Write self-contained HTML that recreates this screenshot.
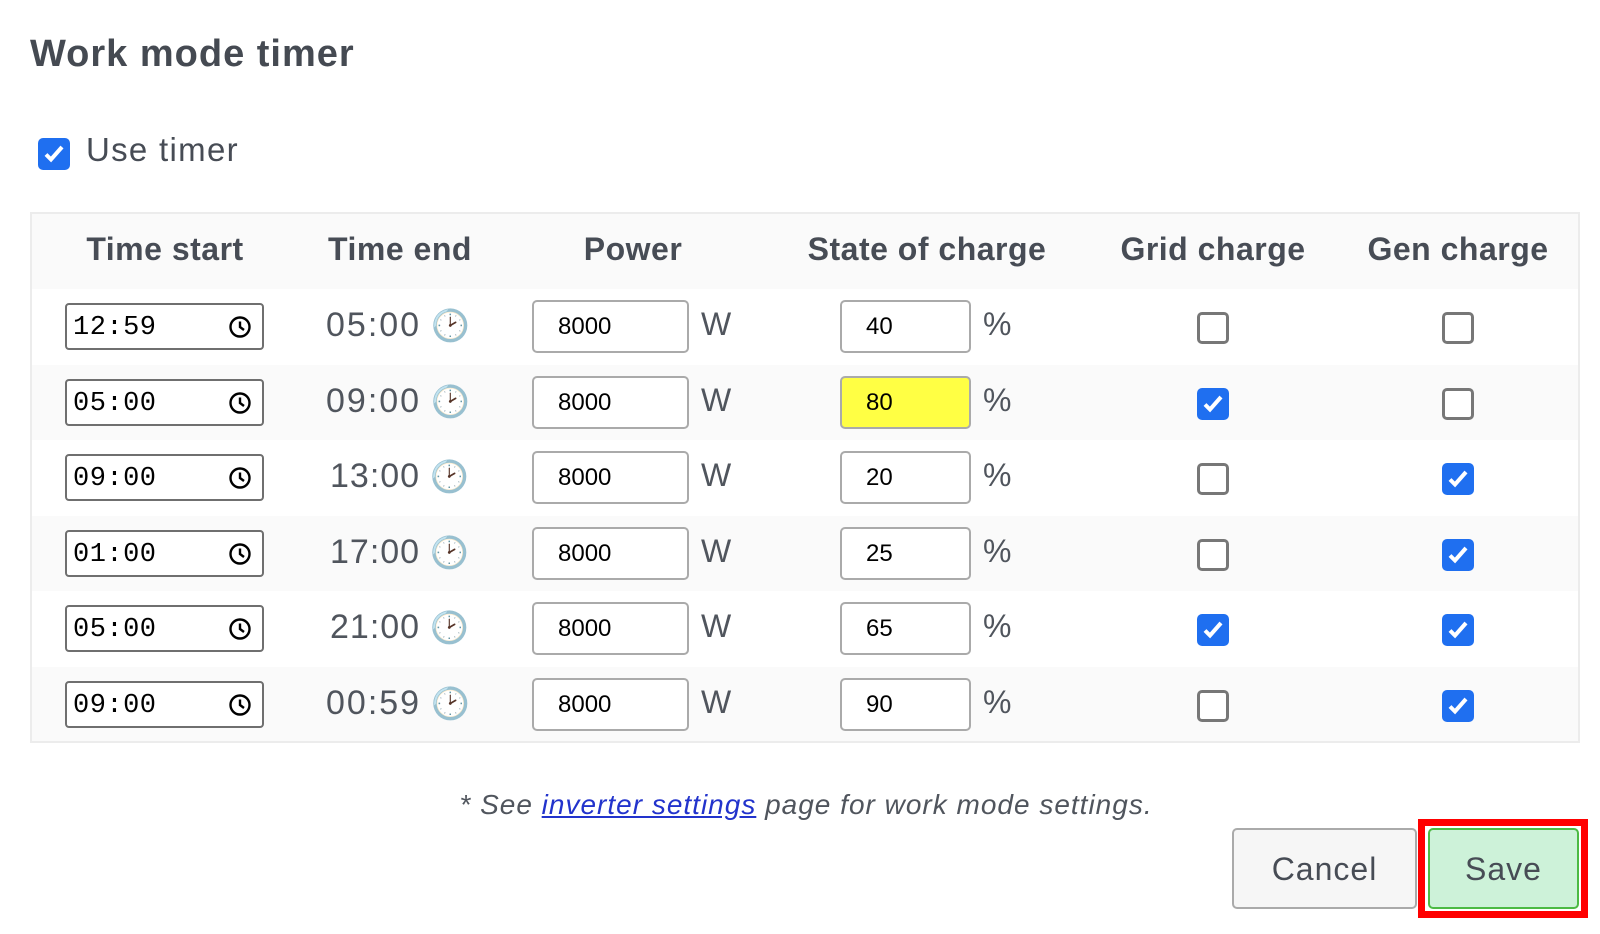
<!DOCTYPE html>
<html><head><meta charset="utf-8"><style>
*{box-sizing:border-box;margin:0;padding:0}
body{width:1600px;height:934px;background:#fff;position:relative;overflow:hidden;font-family:"Liberation Sans",sans-serif;color:#474c55}
.a{position:absolute}
h1{position:absolute;left:30px;top:33px;font-size:38px;font-weight:bold;color:#454a52;letter-spacing:1px}
.cb{position:absolute;width:32px;height:32px;border-radius:5px;border:3px solid #777;background:#fff}
.cb.on{background:#1f6ff0;border:none}
.cb.on svg{position:absolute;left:4px;top:4px}
.table{position:absolute;left:30px;top:212px;width:1550px;height:531px;border:2px solid #ececec;background:#fafafa}
.hd{position:absolute;top:0;height:77px;line-height:70px;font-size:32px;font-weight:bold;color:#474c55;text-align:center;transform:translateX(-50%);white-space:nowrap;letter-spacing:0.5px}
.row{position:absolute;left:0;width:1546px;height:75.5px}
.ti{position:absolute;left:33px;top:14px;width:199px;height:47px;border:2px solid #6f6f6f;border-radius:4px;background:#fff;font-family:"Liberation Mono",monospace;font-size:27px;line-height:47px;padding-left:6px;color:#000;letter-spacing:0.5px}
.ti svg{position:absolute;right:10px;top:10px}
.te{position:absolute;left:294px;top:0;line-height:72px;font-size:34px;color:#50555d;letter-spacing:2px}
.te span{font-size:31px;margin-left:10px}
.in{position:absolute;top:11px;height:53px;border:2px solid #aaa;border-radius:5px;background:#fff;font-size:24px;line-height:49px;padding-left:24px;color:#000}
.u{position:absolute;top:0;line-height:70px;font-size:32px;color:#50555d}
.btn{position:absolute;top:828px;height:81px;border-radius:5px;font-size:32px;text-align:center;line-height:78px;color:#474c55;letter-spacing:1px}
</style></head><body>
<h1>Work mode timer</h1>
<div class="cb on" style="left:38px;top:138px"><svg width="24" height="24" viewBox="0 0 24 24"><path d="M4 12.5l5 5L20 5" fill="none" stroke="#fff" stroke-width="4"/></svg></div>
<div class="a" style="left:86px;top:131px;font-size:33px;color:#474c55;letter-spacing:1.3px">Use timer</div>

<div class="table">
<div class="hd" style="left:133px">Time start</div>
<div class="hd" style="left:368px">Time end</div>
<div class="hd" style="left:601px">Power</div>
<div class="hd" style="left:895px">State of charge</div>
<div class="hd" style="left:1181px">Grid charge</div>
<div class="hd" style="left:1426px">Gen charge</div>
<div class="a" style="left:0;top:75px;width:1546px;height:2px;background:#ececec"></div>
</div>

<div class="row" style="left:32px;top:289px;background:#fff">
<div class="ti">12:59<svg width="24" height="24" viewBox="0 0 24 24"><circle cx="12" cy="12" r="9.5" fill="none" stroke="#000" stroke-width="2.4"/><path d="M12 6.5V12l4 3" fill="none" stroke="#000" stroke-width="2.4"/></svg></div>
<div class="te">05:00<span>🕑</span></div>
<div class="in" style="left:500px;width:157px">8000</div><div class="u" style="left:669px">W</div>
<div class="in" style="left:808px;width:131px">40</div><div class="u" style="left:951px">%</div>
<div class="cb" style="left:1165px;top:23px"></div><div class="cb" style="left:1410px;top:23px"></div>
</div>
<div class="row" style="left:32px;top:364.5px;background:#fafafa">
<div class="ti">05:00<svg width="24" height="24" viewBox="0 0 24 24"><circle cx="12" cy="12" r="9.5" fill="none" stroke="#000" stroke-width="2.4"/><path d="M12 6.5V12l4 3" fill="none" stroke="#000" stroke-width="2.4"/></svg></div>
<div class="te">09:00<span>🕑</span></div>
<div class="in" style="left:500px;width:157px">8000</div><div class="u" style="left:669px">W</div>
<div class="in" style="left:808px;width:131px;background:#ffff44">80</div><div class="u" style="left:951px">%</div>
<div class="cb on" style="left:1165px;top:23px"><svg width="24" height="24" viewBox="0 0 24 24"><path d="M4 12.5l5 5L20 5" fill="none" stroke="#fff" stroke-width="4"/></svg></div><div class="cb" style="left:1410px;top:23px"></div>
</div>
<div class="row" style="left:32px;top:440px;background:#fff">
<div class="ti">09:00<svg width="24" height="24" viewBox="0 0 24 24"><circle cx="12" cy="12" r="9.5" fill="none" stroke="#000" stroke-width="2.4"/><path d="M12 6.5V12l4 3" fill="none" stroke="#000" stroke-width="2.4"/></svg></div>
<div class="te" style="left:298px;letter-spacing:1px">13:00<span>🕑</span></div>
<div class="in" style="left:500px;width:157px">8000</div><div class="u" style="left:669px">W</div>
<div class="in" style="left:808px;width:131px">20</div><div class="u" style="left:951px">%</div>
<div class="cb" style="left:1165px;top:23px"></div><div class="cb on" style="left:1410px;top:23px"><svg width="24" height="24" viewBox="0 0 24 24"><path d="M4 12.5l5 5L20 5" fill="none" stroke="#fff" stroke-width="4"/></svg></div>
</div>
<div class="row" style="left:32px;top:515.5px;background:#fafafa">
<div class="ti">01:00<svg width="24" height="24" viewBox="0 0 24 24"><circle cx="12" cy="12" r="9.5" fill="none" stroke="#000" stroke-width="2.4"/><path d="M12 6.5V12l4 3" fill="none" stroke="#000" stroke-width="2.4"/></svg></div>
<div class="te" style="left:298px;letter-spacing:1px">17:00<span>🕑</span></div>
<div class="in" style="left:500px;width:157px">8000</div><div class="u" style="left:669px">W</div>
<div class="in" style="left:808px;width:131px">25</div><div class="u" style="left:951px">%</div>
<div class="cb" style="left:1165px;top:23px"></div><div class="cb on" style="left:1410px;top:23px"><svg width="24" height="24" viewBox="0 0 24 24"><path d="M4 12.5l5 5L20 5" fill="none" stroke="#fff" stroke-width="4"/></svg></div>
</div>
<div class="row" style="left:32px;top:591px;background:#fff">
<div class="ti">05:00<svg width="24" height="24" viewBox="0 0 24 24"><circle cx="12" cy="12" r="9.5" fill="none" stroke="#000" stroke-width="2.4"/><path d="M12 6.5V12l4 3" fill="none" stroke="#000" stroke-width="2.4"/></svg></div>
<div class="te" style="left:298px;letter-spacing:1px">21:00<span>🕑</span></div>
<div class="in" style="left:500px;width:157px">8000</div><div class="u" style="left:669px">W</div>
<div class="in" style="left:808px;width:131px">65</div><div class="u" style="left:951px">%</div>
<div class="cb on" style="left:1165px;top:23px"><svg width="24" height="24" viewBox="0 0 24 24"><path d="M4 12.5l5 5L20 5" fill="none" stroke="#fff" stroke-width="4"/></svg></div><div class="cb on" style="left:1410px;top:23px"><svg width="24" height="24" viewBox="0 0 24 24"><path d="M4 12.5l5 5L20 5" fill="none" stroke="#fff" stroke-width="4"/></svg></div>
</div>
<div class="row" style="left:32px;top:666.5px;background:#fafafa;height:74.5px">
<div class="ti">09:00<svg width="24" height="24" viewBox="0 0 24 24"><circle cx="12" cy="12" r="9.5" fill="none" stroke="#000" stroke-width="2.4"/><path d="M12 6.5V12l4 3" fill="none" stroke="#000" stroke-width="2.4"/></svg></div>
<div class="te">00:59<span>🕑</span></div>
<div class="in" style="left:500px;width:157px">8000</div><div class="u" style="left:669px">W</div>
<div class="in" style="left:808px;width:131px">90</div><div class="u" style="left:951px">%</div>
<div class="cb" style="left:1165px;top:23px"></div><div class="cb on" style="left:1410px;top:23px"><svg width="24" height="24" viewBox="0 0 24 24"><path d="M4 12.5l5 5L20 5" fill="none" stroke="#fff" stroke-width="4"/></svg></div>
</div>

<div class="a" style="left:0;width:1612px;top:789px;text-align:center;font-size:28px;font-style:italic;color:#50555d;letter-spacing:1px">* See <span style="color:#2233cc;text-decoration:underline">inverter settings</span> page for work mode settings.</div>

<div class="btn" style="left:1232px;width:185px;border:2px solid #aaa;background:#f6f6f6">Cancel</div>
<div class="a" style="left:1418px;top:819px;width:170px;height:99px;border:7px solid #ff0000"></div>
<div class="btn" style="left:1428px;width:151px;border:2px solid #4cba44;background:#cdf2d9">Save</div>
</body></html>
